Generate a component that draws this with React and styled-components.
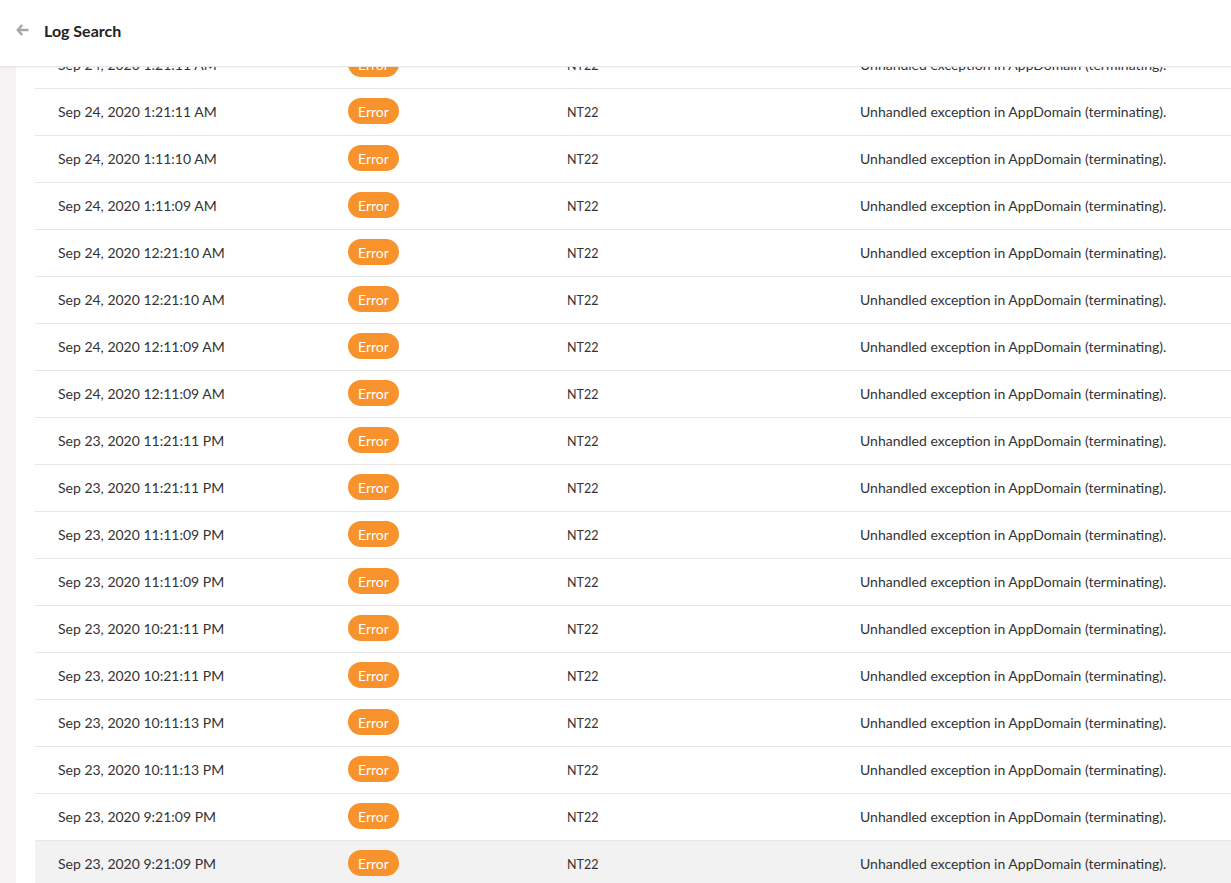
import React, { useEffect, useRef } from "react";
import styled, { createGlobalStyle } from "styled-components";

const GlobalStyle = createGlobalStyle`
  html, body, #root { margin: 0; padding: 0; height: 100%; }
  body {
    font-family: Lato, "Open Sans", Arial, sans-serif;
    color: #333;
    background: #fff;
    overflow: hidden;
  }
`;

const times = [
  "Sep 24, 2020 1:21:11 AM",
  "Sep 24, 2020 1:21:11 AM",
  "Sep 24, 2020 1:11:10 AM",
  "Sep 24, 2020 1:11:09 AM",
  "Sep 24, 2020 12:21:10 AM",
  "Sep 24, 2020 12:21:10 AM",
  "Sep 24, 2020 12:11:09 AM",
  "Sep 24, 2020 12:11:09 AM",
  "Sep 23, 2020 11:21:11 PM",
  "Sep 23, 2020 11:21:11 PM",
  "Sep 23, 2020 11:11:09 PM",
  "Sep 23, 2020 11:11:09 PM",
  "Sep 23, 2020 10:21:11 PM",
  "Sep 23, 2020 10:21:11 PM",
  "Sep 23, 2020 10:11:13 PM",
  "Sep 23, 2020 10:11:13 PM",
  "Sep 23, 2020 9:21:09 PM",
  "Sep 23, 2020 9:21:09 PM",
  "Sep 23, 2020 9:11:09 PM",
];

export default function App() {
  const scrollRef = useRef(null);

  useEffect(() => {
    if (scrollRef.current) scrollRef.current.scrollTop = 25;
  }, []);

  return (
    <>
      <GlobalStyle />
      <Page>
        <Header>
          <BackBtn aria-label="back">
            <svg width="13" height="12" viewBox="0 0 26 24">
              <path
                fill="#a6a6a6"
                d="M11.5 1.2 L13.6 3.3 Q14.3 4 13.6 4.7 L8.4 9.7 H24 Q25 9.7 25 10.7 V13.3 Q25 14.3 24 14.3 H8.4 L13.6 19.3 Q14.3 20 13.6 20.7 L11.5 22.8 Q10.8 23.5 10.1 22.8 L0.8 12.7 Q0.2 12 0.8 11.3 L10.1 1.2 Q10.8 0.5 11.5 1.2 Z"
              />
            </svg>
          </BackBtn>
          <Title>Log Search</Title>
        </Header>
        <Body>
          <SideStrip />
          <Panel ref={scrollRef}>
            <Table>
              {times.map((t, i) => (
                <Row key={i} $hover={i === 17}>
                  <Cell>{t}</Cell>
                  <Cell>
                    <Badge>Error</Badge>
                  </Cell>
                  <Cell $small>NT22</Cell>
                  <Cell>Unhandled exception in AppDomain (terminating).</Cell>
                </Row>
              ))}
            </Table>
          </Panel>
        </Body>
      </Page>
    </>
  );
}

const Page = styled.div`
  display: flex;
  flex-direction: column;
  height: 100vh;
`;

const Header = styled.div`
  height: 67px;
  box-sizing: border-box;
  flex-shrink: 0;
  display: flex;
  align-items: center;
  padding: 0 0 6px 16px;
  border-bottom: 1px solid #e6e6e6;
  background: #fff;
  box-shadow: 0 1px 2px rgba(0, 0, 0, 0.03);
  position: relative;
  z-index: 2;
`;

const BackBtn = styled.button`
  background: transparent;
  border: 0;
  padding: 0;
  margin: 0 15px 0 0;
  display: flex;
  align-items: center;
  cursor: pointer;
`;

const Title = styled.h1`
  margin: 0;
  font-size: 16px;
  font-weight: 700;
  color: #222;
`;

const Body = styled.div`
  flex: 1;
  display: flex;
  min-height: 0;
`;

const SideStrip = styled.div`
  width: 16px;
  flex-shrink: 0;
  background: #f4f2f3;
`;

const Panel = styled.div`
  flex: 1;
  overflow: hidden;
  background: #fff;
  padding-left: 19px;
`;

const Table = styled.div`
  display: flex;
  flex-direction: column;
`;

const Row = styled.div`
  display: grid;
  grid-template-columns: 290px 219px 293px 1fr;
  align-items: center;
  height: 46px;
  box-sizing: content-box;
  padding: 0 0 0 23px;
  border-bottom: 1px solid #e8e8e8;
  background: ${(p) => (p.$hover ? "#f2f2f2" : "#fff")};
`;

const Cell = styled.div`
  font-size: ${(p) => (p.$small ? "12.5px" : "14px")};
  padding-top: ${(p) => (p.$small ? "0" : "0")};
  padding-bottom: ${(p) => (p.$small ? "0" : "2px")};
  color: #333;
  white-space: nowrap;
`;

const Badge = styled.span`
  display: inline-flex;
  align-items: center;
  justify-content: center;
  width: 51px;
  height: 26px;
  border-radius: 13px;
  background: #f7922c;
  color: #fff;
  font-size: 14px;
`;
